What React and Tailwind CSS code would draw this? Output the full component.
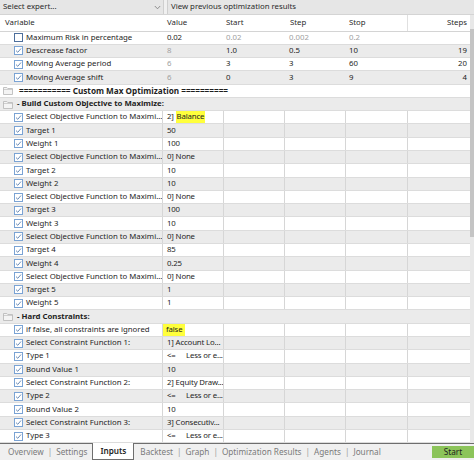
import React from 'react';

const COLS = ['w-[163px]', 'w-[61px]', 'w-[61px]', 'w-[61px]', 'w-[62px]', 'w-[62px]'];

const rows = [
  { label: 'Maximum Risk in percentage', checked: false, value: '0.02', start: '0.02', step: '0.002', stop: '0.2', steps: '', rangeDim: true, plain: true },
  { label: 'Descrease factor', checked: true, value: '8', valueDim: true, start: '1.0', step: '0.5', stop: '10', steps: '19', plain: true },
  { label: 'Moving Average period', checked: true, value: '6', valueDim: true, start: '3', step: '3', stop: '60', steps: '20', plain: true },
  { label: 'Moving Average shift', checked: true, value: '6', valueDim: true, start: '0', step: '3', stop: '9', steps: '4', plain: true },
  { group: true, label: '=========== Custom Max Optimization ==========', center: true },
  { group: true, label: '- Build Custom Objective to Maximize:' },
  { label: 'Select Objective Function to Maximi...', checked: true, value: '2] ', mark: 'Balance' },
  { label: 'Target 1', checked: true, value: '50' },
  { label: 'Weight 1', checked: true, value: '100' },
  { label: 'Select Objective Function to Maximi...', checked: true, value: '0] None' },
  { label: 'Target 2', checked: true, value: '10' },
  { label: 'Weight 2', checked: true, value: '10' },
  { label: 'Select Objective Function to Maximi...', checked: true, value: '0] None' },
  { label: 'Target 3', checked: true, value: '100' },
  { label: 'Weight 3', checked: true, value: '10' },
  { label: 'Select Objective Function to Maximi...', checked: true, value: '0] None' },
  { label: 'Target 4', checked: true, value: '85' },
  { label: 'Weight 4', checked: true, value: '0.25' },
  { label: 'Select Objective Function to Maximi...', checked: true, value: '0] None' },
  { label: 'Target 5', checked: true, value: '1' },
  { label: 'Weight 5', checked: true, value: '1' },
  { group: true, label: '- Hard Constraints:' },
  { label: 'if false, all constraints are ignored', checked: true, value: '', mark: 'false' },
  { label: 'Select Constraint Function 1:', checked: true, value: '1] Account Lo...' },
  { label: 'Type 1', checked: true, type: true },
  { label: 'Bound Value 1', checked: true, value: '10' },
  { label: 'Select Constraint Function 2:', checked: true, value: '2] Equity Draw...' },
  { label: 'Type 2', checked: true, type: true },
  { label: 'Bound Value 2', checked: true, value: '10' },
  { label: 'Select Constraint Function 3:', checked: true, value: '3] Consecutiv...' },
  { label: 'Type 3', checked: true, type: true },
];

const Check = ({ checked }) => (
  <span className={`w-[9px] h-[9px] shrink-0 border bg-white flex items-center justify-center ${checked ? 'border-[#7aa3d4]' : 'border-[#4d6f9c]'}`}>
    {checked && (
      <svg width="7" height="7" viewBox="0 0 7 7">
        <path d="M1 3.6 L2.8 5.3 L6 1.5" fill="none" stroke="#5a7fae" strokeWidth="0.9" />
      </svg>
    )}
  </span>
);

const Folder = () => (
  <svg width="10" height="9" viewBox="0 0 10 9" className="shrink-0">
    <path d="M0.5 1.5 H3.8 L4.8 2.5 H9.5 V8.5 H0.5 Z" fill="#f4f4f4" stroke="#b5b5b5" strokeWidth="0.8" />
    <path d="M0.5 3.5 H9.5" stroke="#b5b5b5" strokeWidth="0.6" />
  </svg>
);

const Row = ({ r, i }) => {
  const bg = i % 2 === 0 ? 'bg-white' : 'bg-[#ebebeb]';
  if (r.group) {
    return (
      <div className={`h-[13.3px] flex items-center border-b border-[#dcdcdc] ${bg}`}>
        <span className="pl-[3px] pr-[4px] flex"><Folder /></span>
        <span className={`font-bold text-[#1e1e1e] whitespace-nowrap ${r.center ? 'pl-[2px] text-[8.2px]' : ''}`}>{r.label}</span>
      </div>
    );
  }
  const line = r.plain ? '' : 'border-r border-[#d6d6d6]';
  const rangeCls = r.rangeDim ? 'text-[#a0a0a0]' : 'text-[#1e1e1e]';
  return (
    <div className={`h-[13.3px] flex items-center border-b border-[#dcdcdc] ${bg}`}>
      <div className={`${COLS[0]} shrink-0 h-full flex items-center pl-[14px] gap-[3px] ${line} overflow-hidden whitespace-nowrap`}>
        <Check checked={r.checked} />
        <span className="text-[#1e1e1e]">{r.label}</span>
      </div>
      <div className={`${COLS[1]} shrink-0 h-full flex items-center ${line} whitespace-nowrap overflow-hidden tracking-[-0.15px]`}>
        {r.type ? (
          <span className="pl-[4px] text-[#1e1e1e]"><span className="inline-block w-[19px]">&lt;=</span>Less or e...</span>
        ) : (
          <span className={`${r.mark && !r.value ? '' : 'pl-[4px]'} h-full flex items-center whitespace-pre ${r.valueDim ? 'text-[#a0a0a0]' : 'text-[#1e1e1e]'}`}>
            {r.value}
            {r.mark && <span className={`bg-[#ffff3c] h-full flex items-center ${r.value ? 'px-[1px]' : 'px-[3px]'}`}>{r.mark}</span>}
          </span>
        )}
      </div>
      <div className={`${COLS[2]} shrink-0 h-full flex items-center pl-[2px] ${line} ${rangeCls}`}>{r.start}</div>
      <div className={`${COLS[3]} shrink-0 h-full flex items-center pl-[4px] ${line} ${rangeCls}`}>{r.step}</div>
      <div className={`${COLS[4]} shrink-0 h-full flex items-center pl-[3px] ${line} ${rangeCls}`}>{r.stop}</div>
      <div className={`${COLS[5]} shrink-0 h-full flex items-center justify-end pr-[3px] text-[#1e1e1e]`}>{r.steps}</div>
    </div>
  );
};

const Sep = () => <span className="text-[#9a9a9a] px-[4px]">|</span>;

export default function App() {
  return (
    <div className="w-[474px] h-[460px] overflow-hidden flex flex-col bg-white text-[7.8px] leading-none" style={{ fontFamily: '"Noto Sans", "Open Sans", sans-serif' }}>
      {/* toolbar */}
      <div className="h-[15px] flex items-stretch bg-[#f0f0f0] border-b border-[#d4d4d4] shrink-0">
        <div className="w-[164px] flex items-center justify-between bg-[#e6e6e6] border-r border-[#cfcfcf] pl-[3px] pr-[2px] text-[#2a2a2a]">
          <span>Select expert...</span>
          <svg width="7" height="5" viewBox="0 0 7 5"><path d="M0.8 1 L3.5 3.8 L6.2 1" fill="none" stroke="#777" strokeWidth="0.8" /></svg>
        </div>
        <div className="w-[3px]" />
        <div className="flex-1 flex items-center bg-[#e6e6e6] border-l border-[#cfcfcf] pl-[3px] text-[#2a2a2a]">View previous optimization results</div>
      </div>

      <div className="flex flex-1 min-h-0">
        <div className="w-[470px] flex flex-col">
          {/* header */}
          <div className="h-[16.5px] flex items-center border-b border-[#d4d4d4] text-[#2a2a2a] shrink-0">
            <div className={`${COLS[0]} pl-[5px]`}>Variable</div>
            <div className={`${COLS[1]} pl-[4px]`}>Value</div>
            <div className={`${COLS[2]} pl-[2px]`}>Start</div>
            <div className={`${COLS[3]} pl-[5px]`}>Step</div>
            <div className={`${COLS[4]} pl-[3px] h-full flex items-center border-r border-[#e0e0e0]`}>Stop</div>
            <div className={`${COLS[5]} text-right pr-[3px]`}>Steps</div>
          </div>
          {rows.map((r, i) => <Row key={i} r={r} i={i} />)}
        </div>
        {/* scrollbar */}
        <div className="w-[4px] flex flex-col bg-[#e8e8e8] pt-[14px]">
          <div className="h-[208px] bg-[#c4c4c4]" />
        </div>
      </div>

      {/* tabs */}
      <div className="h-[17px] shrink-0 flex items-stretch bg-[#f0f0f0] border-t border-[#6e6e6e] text-[#7a7a7a] text-[8.2px]">
        <div className="flex items-center pl-[8px]">
          <span>Overview</span><Sep /><span>Settings</span>
        </div>
        <div className="ml-[5px] -mt-[1px] px-[7px] flex items-center bg-white border-x border-b border-[#6e6e6e] text-[#1e1e1e] font-semibold">Inputs</div>
        <div className="flex items-center pl-[6px]">
          <span>Backtest</span><Sep /><span>Graph</span><Sep /><span>Optimization Results</span><Sep /><span>Agents</span><Sep /><span>Journal</span>
        </div>
        <div className="ml-auto w-[42px] my-[2px] bg-[#8cc45a] flex items-center justify-center text-[#1e1e1e]">Start</div>
      </div>
    </div>
  );
}
